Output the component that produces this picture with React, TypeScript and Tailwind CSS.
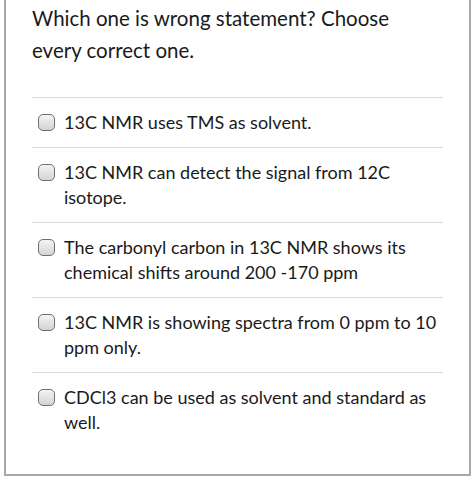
import React from "react";

const options: string[][] = [
  ["13C NMR uses TMS as solvent."],
  ["13C NMR can detect the signal from 12C", "isotope."],
  ["The carbonyl carbon in 13C NMR shows its", "chemical shifts around 200 -170 ppm"],
  ["13C NMR is showing spectra from 0 ppm to 10", "ppm only."],
  ["CDCl3 can be used as solvent and standard as", "well."],
];

function Box() {
  return (
    <span className="mt-[4px] h-[17px] w-[17px] shrink-0 rounded-[5px] border-[1.5px] border-[#6f6f6f] bg-gradient-to-b from-[#f4f4f4] to-[#d4d4d4]" />
  );
}

export default function App() {
  return (
    <div className="h-[479px] w-[474px] bg-white" style={{ fontFamily: "Lato, 'Open Sans', sans-serif" }}>
      <div className="ml-[4px] flex h-[476px] w-[467px] flex-col border-x-2 border-b-2 border-[#a8a8a8] px-[26px] text-[#1a1a1a]">
        <div className="pt-[2px] text-[20.5px] leading-[32px]">
          <div>Which one is wrong statement? Choose</div>
          <div>every correct one.</div>
        </div>
        <div className="mt-[31px] border-t border-[#dcdcdc]">
          {options.map((lines, i) => (
            <div
              key={i}
              className={`flex gap-[9px] pl-[6px] py-[12px] ${i < options.length - 1 ? "border-b border-[#dcdcdc]" : ""}`}
            >
              <Box />
              <div className="text-[18px] leading-[25px]">
                {lines.map((l, j) => (
                  <div key={j} className="whitespace-nowrap">{l}</div>
                ))}
              </div>
            </div>
          ))}
        </div>
      </div>
    </div>
  );
}
